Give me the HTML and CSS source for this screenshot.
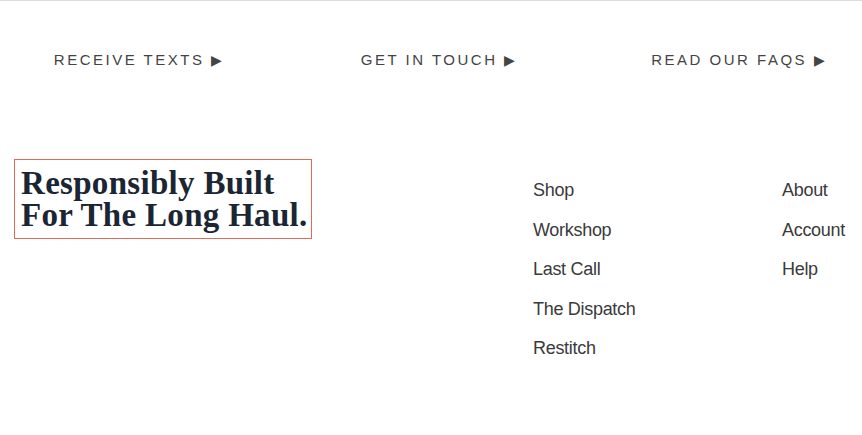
FILE: index.html
```html
<!DOCTYPE html>
<html>
<head>
<meta charset="utf-8">
<link rel="stylesheet" href="styles.css">
</head>
<body>
<footer class="footer">
  <nav class="cta-row">
    <a class="cta" href="#">RECEIVE TEXTS <span class="arrow">&#9654;</span></a>
    <a class="cta" href="#">GET IN TOUCH <span class="arrow">&#9654;</span></a>
    <a class="cta" href="#">READ OUR FAQS <span class="arrow">&#9654;</span></a>
  </nav>
  <div class="main-row">
    <div class="tagline"><span class="line">Responsibly Built</span><span class="line">For The Long Haul.</span></div>
    <ul class="links links-a">
      <li><a href="#">Shop</a></li>
      <li><a href="#">Workshop</a></li>
      <li><a href="#">Last Call</a></li>
      <li><a href="#">The Dispatch</a></li>
      <li><a href="#">Restitch</a></li>
    </ul>
    <ul class="links links-b">
      <li><a href="#">About</a></li>
      <li><a href="#">Account</a></li>
      <li><a href="#">Help</a></li>
    </ul>
  </div>
</footer>
</body>
</html>
```
FILE: styles.css
```css
html, body {
  margin: 0;
  padding: 0;
  background: #fff;
  overflow: hidden;
}
body {
  width: 862px;
  height: 435px;
}
.footer {
  border-top: 1px solid #dcdcdc;
  font-family: "Liberation Sans", Arial, sans-serif;
}
.cta-row {
  display: grid;
  grid-template-columns: 276px 276px 276px;
  column-gap: 24px;
  padding-top: 49px;
}
.cta {
  text-align: center;
  text-decoration: none;
  color: #444;
  font-size: 15px;
  letter-spacing: 2.5px;
  line-height: 20px;
  white-space: nowrap;
}
.arrow {
  font-size: 14px;
  letter-spacing: 0;
}
.main-row {
  display: flex;
  align-items: flex-start;
  margin-top: 89px;
}
.tagline {
  margin-left: 14px;
  flex: none;
  box-sizing: border-box;
  width: 298px;
  height: 80px;
  border: 1px solid #e06a55;
  padding: 7px 0 0 6px;
  font-family: "Liberation Serif", "Times New Roman", serif;
  font-weight: bold;
  font-size: 33px;
  line-height: 32px;
  letter-spacing: 0.3px;
  color: #1b2533;
  white-space: nowrap;
}
.line {
  display: block;
}
.links {
  list-style: none;
  margin: 0;
  padding: 0;
  font-size: 18px;
  line-height: 39.5px;
  letter-spacing: -0.3px;
}
.links a {
  color: #3a3a3a;
  text-decoration: none;
}
.links-a {
  margin-left: 221px;
  margin-top: 12px;
  width: 249px;
}
.links-b {
  margin-top: 12px;
}
```
